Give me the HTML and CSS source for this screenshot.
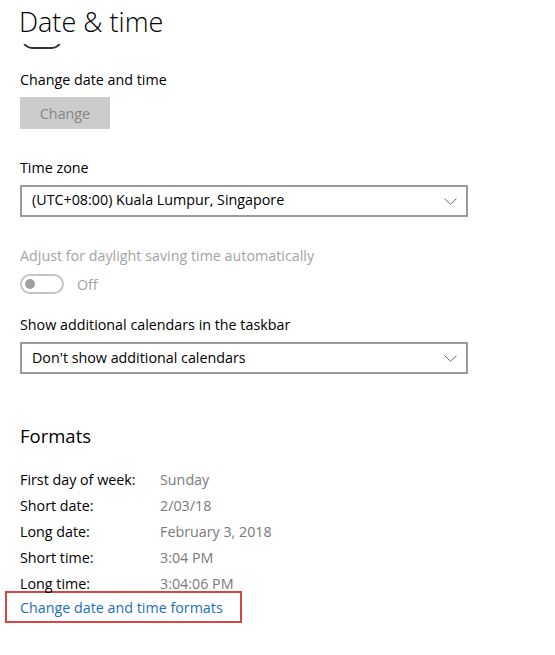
FILE: index.html
```html
<!DOCTYPE html>
<html lang="en">
<head>
<meta charset="utf-8">
<title>Date &amp; time</title>
<link rel="stylesheet" href="styles.css">
</head>
<body>
<div class="page">
  <h1 class="title">Date &amp; time</h1>
  <div class="clip"><span class="toggle toggle-dark"></span></div>

  <div class="label label-first">Change date and time</div>
  <button class="btn" type="button" disabled>Change</button>

  <div class="label label-gap">Time zone</div>
  <div class="select">
    <span class="select-text">(UTC+08:00) Kuala Lumpur, Singapore</span>
    <svg class="chev" width="13" height="7" viewBox="0 0 13 7"><path d="M0.5 0.5 L6.5 6.3 L12.5 0.5" fill="none" stroke="#6e6e6e" stroke-width="1"/></svg>
  </div>

  <div class="label label-gap disabled">Adjust for daylight saving time automatically</div>
  <div class="toggle-row">
    <span class="toggle toggle-off"><span class="knob"></span></span>
    <span class="toggle-text">Off</span>
  </div>

  <div class="label label-gap2">Show additional calendars in the taskbar</div>
  <div class="select">
    <span class="select-text">Don't show additional calendars</span>
    <svg class="chev" width="13" height="7" viewBox="0 0 13 7"><path d="M0.5 0.5 L6.5 6.3 L12.5 0.5" fill="none" stroke="#6e6e6e" stroke-width="1"/></svg>
  </div>

  <h2 class="subtitle">Formats</h2>
  <div class="formats">
    <span class="key">First day of week:</span><span class="val">Sunday</span>
    <span class="key">Short date:</span><span class="val">2/03/18</span>
    <span class="key">Long date:</span><span class="val">February 3, 2018</span>
    <span class="key">Short time:</span><span class="val">3:04 PM</span>
    <span class="key">Long time:</span><span class="val">3:04:06 PM</span>
  </div>
  <div class="highlight"><a class="link" href="#">Change date and time formats</a></div>
</div>
</body>
</html>
```
FILE: styles.css
```css
* { box-sizing: border-box; }
html, body { margin: 0; padding: 0; background: #fff; }
body {
  font-family: "Open Sans", "Noto Sans", "Liberation Sans", sans-serif;
  font-size: 14.3px;
  color: #000;
}
.page {
  padding: 6px 0 0 20px;
  width: 555px;
}
.title {
  margin: 0;
  font-size: 27px;
  font-weight: 300;
  line-height: 32px;
  margin-left: -1px;
}
.clip {
  margin-top: 6px;
  height: 5px;
  overflow: hidden;
  display: flex;
  align-items: flex-end;
  padding-left: 2px;
}
.toggle {
  display: inline-flex;
  align-items: center;
  width: 44px;
  height: 20px;
  border-radius: 10px;
  border: 2px solid #c4c4c4;
  flex: none;
}
.toggle-dark {
  border-color: #333;
  width: 40px;
}
.label {
  line-height: 20px;
}
.label-first { margin-top: 21px; }
.label-gap { margin-top: 29px; }
.label-gap2 { margin-top: 21px; }
.disabled { color: #a3a3a3; }
.btn {
  display: block;
  margin-top: 7px;
  width: 90px;
  height: 32px;
  border: 0;
  background: #cccccc;
  color: #858585;
  font-family: inherit;
  font-size: 14.3px;
  padding: 0;
}
.select {
  margin-top: 7px;
  width: 448px;
  height: 32px;
  border: 2px solid #9a9a9a;
  display: flex;
  align-items: center;
  justify-content: space-between;
  padding: 0 9px 0 10px;
  line-height: 28px;
}
.label-gap + .select .select-text { position: relative; top: -1px; }
.chev { display: block; }
.toggle-row {
  margin-top: 8px;
  display: flex;
  align-items: center;
  gap: 13px;
}
.toggle-off { padding-left: 3px; }
.knob {
  width: 10px;
  height: 10px;
  border-radius: 50%;
  background: #a0a0a0;
}
.toggle-text {
  color: #a3a3a3;
  line-height: 20px;
  position: relative;
  top: 1px;
}
.subtitle {
  margin: 50px 0 0;
  font-size: 18.5px;
  font-weight: 400;
  line-height: 24px;
}
.formats {
  margin-top: 22px;
  display: grid;
  grid-template-columns: 140px auto;
  row-gap: 6px;
  line-height: 20px;
}
.val { color: #7a7a7a; }
.highlight {
  margin: -3px 0 0 -15px;
  width: 237px;
  height: 32px;
  border: 2px solid #d6453f;
  padding: 2px 0 0 13px;
  line-height: 26px;
}
.link {
  color: #1b6fbd;
  text-decoration: none;
}
```
